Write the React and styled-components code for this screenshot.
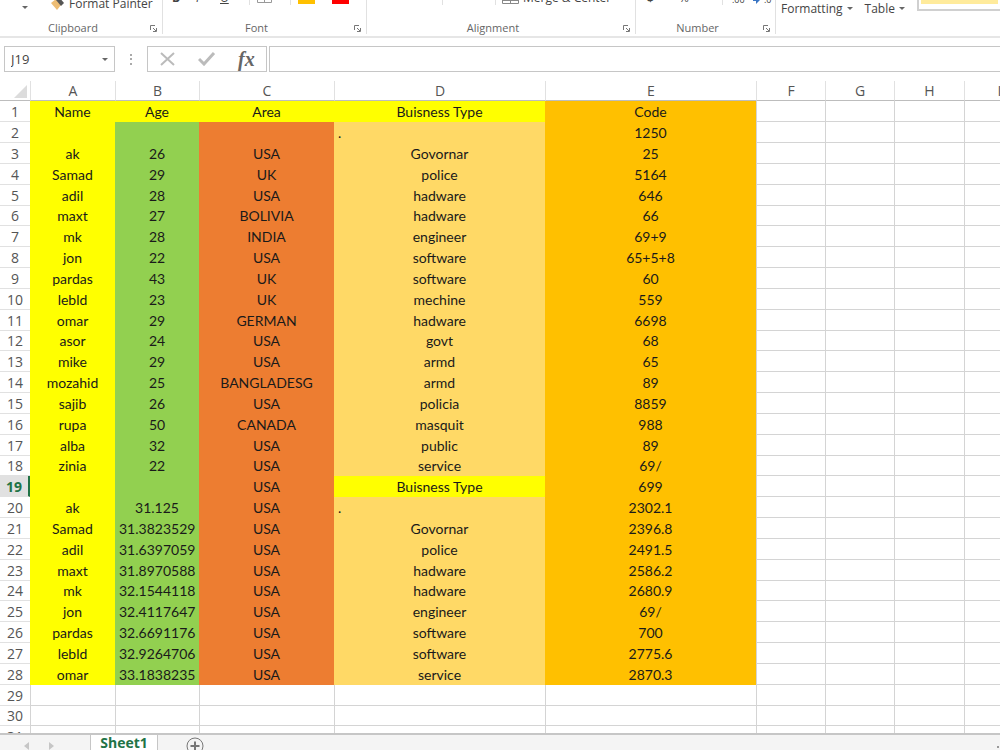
import styled, { createGlobalStyle } from "styled-components"

const GlobalStyle = createGlobalStyle`
    * {
        box-sizing: border-box;
    }

    body {
        margin: 0;
        overflow: hidden;
        background-color: #ffffff;
        font-family: "Open Sans", "Noto Sans", sans-serif;
        color: #444444;
    }

    button, input, select {
        font-family: inherit;
        color: inherit;
    }
`
const Workbook = styled.div`
    display: flex;
    flex-direction: column;
    height: 100vh;
    overflow: hidden;
`

const Ribbon = styled.header`
    display: flex;
    flex: none;
    height: 38px;
    padding-bottom: 2px;
    overflow: hidden;

    border-bottom: 2px solid #e6e6e6;
`
const Group = styled.section`
    display: flex;
    flex: none;
    flex-direction: column;
    justify-content: space-between;
    width: ${props => props.$width}px;

    border-right: 1px solid #e1e1e1;
`
const Tools = styled.div`
    display: flex;
    align-items: flex-end;
    height: ${props => props.$height || 6}px;
    gap: ${props => props.$gap || 0}px;
    padding-left: ${props => props.$start || 0}px;
`
const Tool = styled.button`
    display: flex;
    flex: none;
    align-items: flex-end;
    gap: 4px;
    width: ${props => props.$width ? `${props.$width}px` : "auto"};
    padding: 0;

    border: 0;
    background: none;
    font-size: 12px;
    line-height: 16px;
    white-space: nowrap;
`
const Swatch = styled.span`
    width: 17px;
    height: 4px;
    margin-bottom: 2px;

    background-color: ${props => props.$color};
`
const Glyph = styled.span`
    margin-bottom: 2px;

    font-size: ${props => props.$small ? 9 : 12}px;
    line-height: ${props => props.$small ? 8 : 12}px;
    font-weight: ${props => props.$bold ? 700 : 400};
    font-style: ${props => props.$italic ? "italic" : "normal"};
    text-decoration: ${props => props.$underline ? "underline" : "none"};
`
const Split = styled.span`
    width: 1px;
    height: 6px;
    margin: 0 0 1px ${props => props.$before || 0}px;

    background-color: #e1e1e1;
`
const GroupFooter = styled.div`
    display: flex;
    align-items: center;
    gap: 4px;
    padding-right: 5px;

    font-size: 11px;
    line-height: 12px;
    color: #666666;
`
const GroupName = styled.span`
    flex: 1;

    text-align: center;
`
const Launcher = styled.button`
    display: flex;
    padding: 0;

    border: 0;
    background: none;
`
const Styles = styled.section`
    display: flex;
    flex: 1;
    gap: 12px;
    min-width: 0;
    padding-left: 5px;
`
const StyleButton = styled(Tool)`
    align-items: center;
    height: 17px;
`
const Gallery = styled.div`
    flex: 1;
    height: 11px;
    padding: 0 2px;

    border: 2px solid #d0d0d0;
    border-top: 0;
    border-right: 0;
`
const GalleryItem = styled.div`
    height: 4px;

    background-color: #ffeb9c;
`

const FormulaBar = styled.div`
    display: flex;
    flex: none;
    align-items: center;
    padding: 8px 0 9px 4px;
`
const NameBox = styled.label`
    display: flex;
    align-items: center;
    width: 111px;
    height: 26px;
    padding: 0 6px;

    border: 1px solid #c6c6c6;
`
const NameInput = styled.input`
    flex: 1;
    min-width: 0;
    padding: 0;

    border: 0;
    outline: 0;
    font-size: 13px;
`
const Grip = styled.span`
    display: flex;
    justify-content: center;
    width: 32px;
`
const EntryButtons = styled.div`
    display: flex;
    align-items: center;
    gap: 22px;
    width: 120px;
    height: 26px;
    margin-right: 2px;
    padding-left: 12px;

    border: 1px solid #c6c6c6;
`
const EntryButton = styled.button`
    display: flex;
    padding: 0;

    border: 0;
    background: none;
`
const FunctionButton = styled(EntryButton)`
    font-family: "Liberation Serif", serif;
    font-size: 20px;
    font-style: italic;
    font-weight: 700;
    line-height: 22px;
    color: #666666;
`
const FormulaInput = styled.input`
    flex: 1;
    height: 26px;
    min-width: 0;

    border: 1px solid #c6c6c6;
    border-right: 0;
    outline: 0;
`

const SheetArea = styled.main`
    flex: 1;
    min-height: 0;
    overflow: hidden;
`
const Sheet = styled.table`
    width: 1034px;

    border-collapse: separate;
    border-spacing: 0;
    table-layout: fixed;
`
const ColumnHead = styled.th`
    height: 20px;
    padding: 0;

    border-left: 1px solid #e1e1e1;
    border-bottom: 1px solid #bdbdbd;
    font-size: 14px;
    font-weight: 400;
    line-height: 18px;
    color: #555555;
`
const Corner = styled(ColumnHead)`
    border-left: 0;

    svg {
        display: block;
        margin: 2px 3px 0 auto;
    }
`
const Row = styled.tr`
    height: 21px;

    &:nth-child(6n) {
        height: 20px;
    }
`
const RowHead = styled.th`
    padding: 1px 0 0;

    border-right: ${props => props.$active ? "2px solid #217346" : "0"};
    border-bottom: 1px solid #e1e1e1;
    background-color: ${props => props.$active ? "#e1e1e1" : "#ffffff"};
    font-size: 14px;
    font-weight: ${props => props.$active ? 700 : 400};
    line-height: 18px;
    color: ${props => props.$active ? "#217346" : "#555555"};
`
const Cell = styled.td`
    padding: 1px 4px 0 3px;

    border-left: 1px solid ${props => props.$fill || "#d4d4d4"};
    border-bottom: 1px solid ${props => props.$fill || "#d4d4d4"};
    background-color: ${props => props.$fill || "#ffffff"};
    font-family: Lato, sans-serif;
    font-size: 14px;
    line-height: 18px;
    text-align: ${props => props.$left ? "left" : "center"};
    white-space: nowrap;
    color: #1a1a1a;
`

const TabBar = styled.footer`
    display: flex;
    flex: none;
    height: 17px;
    overflow: hidden;

    border-top: 2px solid #c6c6c6;
    background-color: #f4f4f4;
`
const TabArrows = styled.div`
    display: flex;
    gap: 20px;
    width: 90px;
    padding: 7px 0 0 24px;
`
const Arrow = styled.button`
    display: flex;
    padding: 0;

    border: 0;
    background: none;
`
const Tab = styled.button`
    width: 68px;
    height: 20px;
    margin-top: -2px;
    padding: 0;

    border: 1px solid #c6c6c6;
    border-width: 0 1px;
    background-color: #ffffff;
    font-size: 14px;
    font-weight: 700;
    line-height: 18px;
    color: #217346;
`
const AddSheet = styled(Arrow)`
    flex: 1;
    padding: 2px 0 0 28px;
`
const BarGrip = styled.span`
    padding: 6px 0 0;
`

const yellow = "#ffff00"
const green = "#92d050"
const orange = "#ed7d31"
const sand = "#ffd966"
const gold = "#ffc000"

const columns = ["A", "B", "C", "D", "E", "F", "G", "H", "I"]
const widths = [85, 84, 135, 211, 211, 69, 69, 70, 70]

const rows = [
    ["Name", "Age", "Area", "Buisness Type", "Code"],
    ["", "", "", ".", "1250"],
    ["ak", "26", "USA", "Govornar", "25"],
    ["Samad", "29", "UK", "police", "5164"],
    ["adil", "28", "USA", "hadware", "646"],
    ["maxt", "27", "BOLIVIA", "hadware", "66"],
    ["mk", "28", "INDIA", "engineer", "69+9"],
    ["jon", "22", "USA", "software", "65+5+8"],
    ["pardas", "43", "UK", "software", "60"],
    ["lebld", "23", "UK", "mechine", "559"],
    ["omar", "29", "GERMAN", "hadware", "6698"],
    ["asor", "24", "USA", "govt", "68"],
    ["mike", "29", "USA", "armd", "65"],
    ["mozahid", "25", "BANGLADESG", "armd", "89"],
    ["sajib", "26", "USA", "policia", "8859"],
    ["rupa", "50", "CANADA", "masquit", "988"],
    ["alba", "32", "USA", "public", "89"],
    ["zinia", "22", "USA", "service", "69/"],
    ["", "", "USA", "Buisness Type", "699"],
    ["ak", "31.125", "USA", ".", "2302.1"],
    ["Samad", "31.3823529", "USA", "Govornar", "2396.8"],
    ["adil", "31.6397059", "USA", "police", "2491.5"],
    ["maxt", "31.8970588", "USA", "hadware", "2586.2"],
    ["mk", "32.1544118", "USA", "hadware", "2680.9"],
    ["jon", "32.4117647", "USA", "engineer", "69/"],
    ["pardas", "32.6691176", "USA", "software", "700"],
    ["lebld", "32.9264706", "USA", "software", "2775.6"],
    ["omar", "33.1838235", "USA", "service", "2870.3"],
    [],
    [],
    [],
]

const getFill = (row, col) => {
    if (row > 27 || col > 4) {
        return null;
    }
    if (col === 4) {
        return gold;
    }
    if (row === 0 || col === 0 || (row === 18 && col === 3)) {
        return yellow;
    }
    return [yellow, green, orange, sand][col];
}

const Caret = () => (
    <svg width="6" height="3" viewBox="0 0 6 3"><path d="M0 0h6L3 3z" fill="#666" /></svg>
)

const LaunchIcon = () => (
    <svg width="7" height="7" viewBox="0 0 7 7" fill="none" stroke="#777">
        <path d="M.5 5V.5H5M3 3l3 3M6.500 3v3.500H3" />
    </svg>
)

const Footer = ({ name }) => (
    <GroupFooter>
        <GroupName>{name}</GroupName>
        <Launcher aria-label={`${name} settings`}><LaunchIcon /></Launcher>
    </GroupFooter>
)

const RibbonBar = () => (
    <Ribbon>
        <Group $width={163}>
            <Tools $height={12} $start={22} $gap={22}>
                <Tool aria-label="Paste options">
                    <svg width="6" height="7" viewBox="0 0 6 7"><path d="M0 1h6L3 4z" fill="#666" /></svg>
                </Tool>
                <Tool>
                    <svg width="15" height="18" viewBox="0 0 15 18">
                        <path d="M1 9l5-4 5 6-4 5z" fill="#edbd75" />
                        <path d="M6 6l3-3 5 6-3 3z" fill="#555" />
                    </svg>
                    Format Painter
                </Tool>
            </Tools>
            <Footer name="Clipboard" />
        </Group>

        <Group $width={204}>
            <Tools $start={9} $gap={7}>
                <Tool $width={17} aria-label="Bold"><Glyph $bold>B</Glyph></Tool>
                <Tool $width={17} aria-label="Italic"><Glyph $italic>I</Glyph></Tool>
                <Tool $width={17} aria-label="Underline"><Glyph $underline>U</Glyph></Tool>
                <Split $before={5} />
                <Tool aria-label="Borders">
                    <svg width="15" height="12" viewBox="0 0 15 12"><path d="M.5 0v8.500h14V0M7.500 0v8.500" fill="none" stroke="#999" /></svg>
                </Tool>
                <Split $before={11} />
                <Tool $width={27} aria-label="Fill color"><Swatch $color={gold} /></Tool>
                <Tool aria-label="Font color"><Swatch $color="#ff0000" /></Tool>
            </Tools>
            <Footer name="Font" />
        </Group>

        <Group $width={269}>
            <Tools $start={75} $gap={6}>
                <Split />
                <Split $before={46} />
                <Tool>
                    <svg width="17" height="15" viewBox="0 0 17 15"><path d="M.5 6v6.500h16V6M.5 9.500h16M8.500 9.500v3" fill="none" stroke="#888" /></svg>
                    Merge &amp; Center
                </Tool>
            </Tools>
            <Footer name="Alignment" />
        </Group>

        <Group $width={140}>
            <Tools $start={11} $gap={9}>
                <Tool $width={23} aria-label="Currency"><Glyph $bold>$</Glyph></Tool>
                <Tool $width={14} aria-label="Percent"><Glyph>%</Glyph></Tool>
                <Split $before={20} />
                <Tool $width={12} aria-label="Increase decimals"><Glyph $small>.00</Glyph></Tool>
                <Tool aria-label="Decrease decimals">
                    <svg width="7" height="10" viewBox="0 0 7 10"><path d="M0 3h3V0l4 4-4 4V5H0z" fill="#3a76c4" /></svg>
                    <Glyph $small>.0</Glyph>
                </Tool>
            </Tools>
            <Footer name="Number" />
        </Group>

        <Styles>
            <StyleButton>Formatting <Caret /></StyleButton>
            <StyleButton>Table <Caret /></StyleButton>
            <Gallery><GalleryItem /></Gallery>
        </Styles>
    </Ribbon>
)

const FormulaRow = () => (
    <FormulaBar>
        <NameBox>
            <NameInput aria-label="Name box" defaultValue="J19" />
            <Caret />
        </NameBox>
        <Grip>
            <svg width="2" height="11" viewBox="0 0 2 11" fill="#aaa">
                <path d="M0 0h2v2H0zM0 4h2v2H0zM0 9h2v2H0z" />
            </svg>
        </Grip>
        <EntryButtons>
            <EntryButton aria-label="Cancel">
                <svg width="16" height="14" viewBox="0 0 16 14" stroke="#bbb" strokeWidth="2"><path d="M1 1l13 12M14 1L1 13" /></svg>
            </EntryButton>
            <EntryButton aria-label="Enter">
                <svg width="18" height="14" viewBox="0 0 18 14" fill="none" stroke="#bbb" strokeWidth="3"><path d="M1 7l5 5L16 1" /></svg>
            </EntryButton>
            <FunctionButton aria-label="Insert function">fx</FunctionButton>
        </EntryButtons>
        <FormulaInput aria-label="Formula" />
    </FormulaBar>
)

const SheetTable = () => (
    <SheetArea>
        <Sheet>
            <colgroup>
                <col style={{ width: 30 }} />
                {widths.map((width, i) => <col key={columns[i]} style={{ width }} />)}
            </colgroup>
            <thead>
                <tr>
                    <Corner aria-label="Select all">
                        <svg width="13" height="13" viewBox="0 0 13 13"><path d="M13 0v13H0z" fill="#dcdcdc" /></svg>
                    </Corner>
                    {columns.map(name => <ColumnHead key={name}>{name}</ColumnHead>)}
                </tr>
            </thead>
            <tbody>
                {rows.map((row, r) => (
                    <Row key={r}>
                        <RowHead $active={r === 18}>{r + 1}</RowHead>
                        {columns.map((name, c) => (
                            <Cell key={name} $fill={getFill(r, c)} $left={row[c] === "."}>{row[c]}</Cell>
                        ))}
                    </Row>
                ))}
            </tbody>
        </Sheet>
    </SheetArea>
)

const SheetTabs = () => (
    <TabBar>
        <TabArrows>
            <Arrow aria-label="Previous sheet">
                <svg width="5" height="8" viewBox="0 0 5 8"><path d="M5 0v8L0 4z" fill="#c6c6c6" /></svg>
            </Arrow>
            <Arrow aria-label="Next sheet">
                <svg width="5" height="8" viewBox="0 0 5 8"><path d="M0 0v8l5-4z" fill="#c6c6c6" /></svg>
            </Arrow>
        </TabArrows>
        <Tab>Sheet1</Tab>
        <AddSheet aria-label="New sheet">
            <svg width="18" height="18" viewBox="0 0 18 18" fill="none" stroke="#777">
                <circle cx="9" cy="9" r="8" />
                <path d="M9 4.500v9M4.500 9h9" strokeWidth="2" />
            </svg>
        </AddSheet>
        <BarGrip>
            <svg width="3" height="12" viewBox="0 0 3 12" fill="#999"><path d="M0 0h2v2H0zM0 4h2v2H0zM0 8h2v2H0z" /></svg>
        </BarGrip>
    </TabBar>
)

export default function App() {
    return (
        <Workbook>
            <GlobalStyle />
            <RibbonBar />
            <FormulaRow />
            <SheetTable />
            <SheetTabs />
        </Workbook>
    );
}
